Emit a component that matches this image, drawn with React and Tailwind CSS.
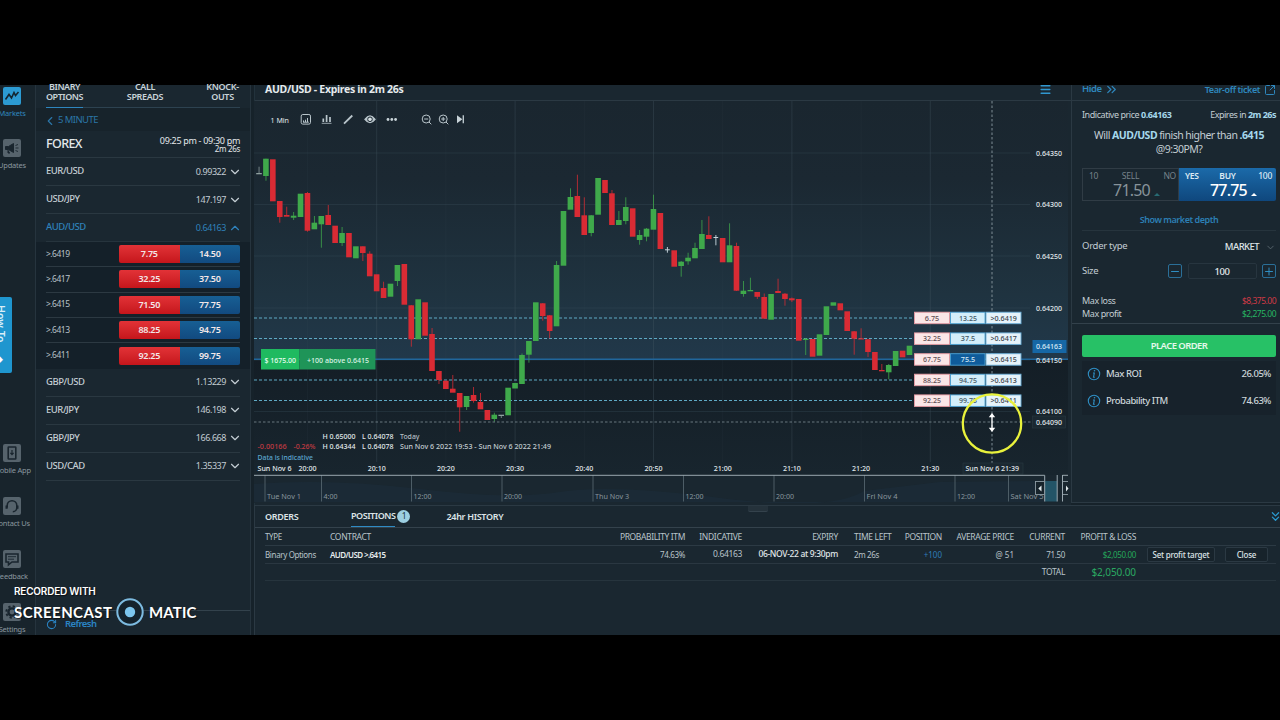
import {
  ChevronDown,
  ChevronUp,
  ChevronLeft,
  ChevronsRight,
  ChevronsDown,
  SquareArrowOutUpRight,
  Menu,
  RotateCw,
  Minus,
  Plus,
} from "lucide-react";

// [direction, body top, body bottom, wick top, wick bottom]
const candles = [
  ["n", 173, 174.3, 166.7, 174],
  ["u", 158.7, 176, 158.7, 180.7],
  ["d", 159.3, 201.3],
  ["d", 201, 217, 201, 222.7],
  ["d", 215, 216.7, 206.7, 216],
  ["u", 215.7, 217.7, 212, 220],
  ["u", 193.7, 217],
  ["d", 193, 230.7, 192, 231.7],
  ["u", 222.7, 229.3, 216, 229],
  ["u", 216, 224.3, 216, 247.7],
  ["d", 215, 225, 205, 225],
  ["d", 225.7, 243],
  ["u", 233, 243, 227, 246],
  ["d", 233, 257.3],
  ["u", 246.3, 258.3],
  ["d", 246.3, 253, 246.3, 261],
  ["d", 253.7, 276.3, 251.3, 276],
  ["d", 274.3, 291.3],
  ["d", 288, 298, 281.7, 298],
  ["u", 283.7, 296.7],
  ["u", 265, 281, 265, 286],
  ["d", 264, 304.7],
  ["d", 305.3, 339.3, 305, 346.7],
  ["u", 299.3, 339.3],
  ["d", 302.3, 335.7],
  ["d", 334, 371, 328, 371],
  ["d", 371, 380, 371, 384],
  ["d", 380.7, 389],
  ["d", 388.7, 392.7, 375, 392],
  ["d", 393, 407.3, 393, 431.7],
  ["u", 396, 407, 396, 410],
  ["d", 395, 401, 387, 402.7],
  ["d", 402, 409.3, 393, 409],
  ["d", 410, 420],
  ["u", 414.7, 419, 412.7, 421.7],
  ["n", 414.7, 416, 415, 418],
  ["u", 387.7, 415.3],
  ["u", 383, 388.5],
  ["u", 355, 384, 353.5, 384],
  ["u", 341, 354.7, 341, 362.7],
  ["u", 302.3, 341],
  ["d", 303.3, 316, 303, 320.7],
  ["d", 315.3, 331, 315, 338.3],
  ["u", 265, 326.3, 261, 326],
  ["u", 211, 265.7],
  ["u", 197, 209.7, 188.3, 209],
  ["d", 196, 217, 174.7, 217],
  ["d", 215.3, 235, 197.3, 235],
  ["u", 215.3, 233, 215, 236.3],
  ["u", 178, 214.7],
  ["d", 180, 193],
  ["d", 193.3, 225, 190, 225],
  ["u", 220, 225, 211, 225],
  ["u", 207, 221, 197.3, 224.3],
  ["d", 208.3, 236.7],
  ["u", 235, 240, 230, 244.7],
  ["u", 228.7, 236.7, 228, 241.3],
  ["u", 209, 229.7, 194.7, 229],
  ["d", 213, 249],
  ["x", 249.3, 250.3, 247, 252.7],
  ["d", 250.3, 266.7],
  ["u", 261.7, 266, 261, 276.7],
  ["u", 257.7, 261.3, 252.7, 264.7],
  ["u", 248, 258.3, 242.7, 258],
  ["u", 234, 249, 220, 249],
  ["d", 235, 239, 216.3, 239],
  ["x", 237, 238, 235, 245.3],
  ["d", 238, 262.3],
  ["u", 245.3, 262.3, 223.3, 262],
  ["d", 246, 290.7, 242.7, 291],
  ["u", 290.7, 294, 281, 296.7],
  ["u", 290, 291.3, 277.7, 291],
  ["d", 292, 296.8, 292, 299],
  ["d", 297, 318.7, 293.5, 318],
  ["u", 294, 319.7],
  ["d", 291, 293, 278.7, 293],
  ["d", 293.7, 299, 293, 305.7],
  ["d", 298.3, 300.3, 297.5, 302],
  ["d", 299, 340.7],
  ["u", 338.7, 340, 338, 355],
  ["d", 339, 356.7],
  ["u", 334.3, 355.7],
  ["u", 306.3, 335],
  ["u", 302.3, 305.7],
  ["d", 303.3, 310.3],
  ["d", 311.3, 331],
  ["d", 331.3, 338.7, 331, 354.7],
  ["d", 338.3, 339.5, 328.3, 339],
  ["d", 339.3, 352, 339, 357],
  ["d", 352, 370],
  ["d", 370, 371.3, 364, 371],
  ["u", 365, 372.3, 364, 379.3],
  ["u", 351, 366],
  ["d", 350.7, 357.3],
  ["u", 345.7, 355],
];

const candleColors = { u: "#3fa94b", d: "#d92b34", n: "#8fa09f", x: "#c5d3da" };

const ladder = [
  [318, "6.75", "13.25", ">0.6419"],
  [338.7, "32.25", "37.5", ">0.6417"],
  [359.5, "67.75", "75.5", ">0.6415"],
  [380, "88.25", "94.75", ">0.6413"],
  [400.7, "92.25", "99.75", ">0.6411"],
];

const prices = [
  [153, "0.64350"],
  [204.5, "0.64300"],
  [256, "0.64250"],
  [308, "0.64200"],
  [360, "0.64150"],
  [411.5, "0.64100"],
  [422, "0.64090"],
];

const times = ["20:00", "20:10", "20:20", "20:30", "20:40", "20:50", "21:00", "21:10", "21:20", "21:30"];

const navTicks = [
  [265, "Tue Nov 1", 34],
  [321.5, "4:00", 14],
  [411.5, "12:00", 18],
  [502, "20:00", 18],
  [593, "Thu Nov 3", 34],
  [683.5, "12:00", 18],
  [774, "20:00", 18],
  [864.5, "Fri Nov 4", 31],
  [955, "12:00", 18],
  [1008.5, "Sat Nov 5", 33],
];

const strikes = [
  [">.6419", "7.75", "14.50"],
  [">.6417", "32.25", "37.50"],
  [">.6415", "71.50", "77.75"],
  [">.6413", "88.25", "94.75"],
  [">.6411", "92.25", "99.75"],
];

// chart label, y is the vertical centre of the text
function Label({ x, y, w, size = 7.5, fill = "#e3eaed", anchor = "start", weight = 500, children }) {
  return (
    <text
      x={x}
      y={y + size * 0.37}
      textLength={w}
      lengthAdjust="spacingAndGlyphs"
      fontSize={size}
      fill={fill}
      textAnchor={anchor}
      fontWeight={weight}
    >
      {children}
    </text>
  );
}

function RailItem({ label, active, children }) {
  return (
    <div className="flex w-6 flex-col items-center">
      <svg
        viewBox="0 0 18 18"
        className={
          active
            ? "h-[18px] w-[18px] rounded-xs bg-[#2c9bd3] text-[#142631]"
            : "h-[18px] w-[18px] rounded-xs bg-[#56636c] text-[#19252e]"
        }
        fill="none"
        stroke="currentColor"
        strokeWidth="1.6"
      >
        {children}
      </svg>
      <span
        className={
          active
            ? "mt-0.5 text-[7.5px] leading-3 tracking-[-0.03em] whitespace-nowrap text-[#2f87bd]"
            : "mt-0.5 text-[7.5px] leading-3 tracking-[-0.03em] whitespace-nowrap text-[#8a979f]"
        }
      >
        {label}
      </span>
    </div>
  );
}

function Rail() {
  return (
    <aside className="relative flex w-9 shrink-0 flex-col overflow-hidden border-r border-[#26343e] bg-[#18242c] pt-0.5">
      <div className="flex h-[363px] flex-col gap-5">
        <RailItem label="Markets" active>
          <path d="M2.5 12.5 L6 7.5 L8.5 11 L11 5.5 L12.5 8.5 L15.5 5" />
        </RailItem>
        <RailItem label="Updates">
          <path d="M2.5 7.5h3l5-3v9l-5-3h-3z M5 11v3h2" fill="currentColor" strokeWidth="1" />
          <path d="M12.5 6.5l2.5-1 M12.5 9h3 M12.5 11.5l2.5 1" strokeWidth="0.9" />
        </RailItem>
      </div>
      <div className="flex flex-col gap-[21px]">
        <RailItem label="Mobile App">
          <rect x="5.2" y="3" width="7.6" height="12" rx="0.5" />
          <path d="M9 6v4 M7.4 8.8L9 10.6l1.6-1.8" strokeWidth="1.2" />
        </RailItem>
        <RailItem label="Contact Us">
          <path d="M4.2 10.5V8.5a4.8 4.8 0 0 1 9.6 0v2.2a4 4 0 0 1-4 4" />
          <path d="M3.6 8.5v3.2 M14.4 8.5v3.2" strokeWidth="2.2" />
        </RailItem>
        <RailItem label="Feedback">
          <path d="M3 4h12v8H9l-3.5 2.8V12H3z" />
          <path d="M5 6.7h8 M5 9.2h6" strokeWidth="0.9" />
        </RailItem>
        <RailItem label="Settings">
          <circle cx="9" cy="9" r="3.6" strokeWidth="2.4" />
          <circle cx="9" cy="9" r="5.7" strokeWidth="2" strokeDasharray="2.24 2.24" />
        </RailItem>
      </div>
      <div className="absolute top-[212px] left-0 h-[76px] w-3 overflow-hidden rounded-r-xs bg-[#1f96cf]">
        <span className="absolute top-2 -left-[6px] text-[10.5px] leading-[14px] font-semibold whitespace-nowrap text-[#d8eef8] [writing-mode:vertical-rl]">
          How To
        </span>
        <span className="absolute top-[55px] -left-1 text-[9px] text-white">◆</span>
      </div>
    </aside>
  );
}

function MarketRow({ name, price, open }) {
  const Icon = open ? ChevronUp : ChevronDown;
  return (
    <div
      className={
        open
          ? "flex h-7 items-center border-b border-[#26343d] text-[#2f82bb]"
          : "flex h-7 items-center border-b border-[#2a3841] text-[#c3cdd3]"
      }
    >
      <span className="flex-1 text-[9.5px] font-medium tracking-[-0.05em]">{name}</span>
      <span className="text-[9px] tracking-[-0.05em]">{price}</span>
      <Icon className="-mr-0.5 ml-0.5" size={14} strokeWidth={2} />
    </div>
  );
}

function Markets() {
  return (
    <aside className="flex w-[215px] shrink-0 flex-col border-r border-[#26343e] bg-[#1a2730]">
      <div className="px-2.5">
        <div className="flex h-[23px] items-end justify-between border-b border-[#2d4250] text-center text-[9px] leading-[10px] font-semibold text-[#c9d3d8]">
          <div className="-mb-px w-[37px] border-b-[1.5px] border-[#2e86bf] pb-[5px]">
            <span className="-mx-1 block tracking-[-0.05em]">BINARY OPTIONS</span>
          </div>
          <span className="w-11 translate-x-px pb-[5px] tracking-[-0.04em]">CALL SPREADS</span>
          <span className="w-[35px] pb-[5px] tracking-[-0.04em]">KNOCK-OUTS</span>
        </div>
      </div>
      <div className="flex h-[23px] items-center bg-[#17232b] px-2.5 pt-0.5 text-[9.5px] tracking-[-0.06em] text-[#2b76a7]">
        <ChevronLeft className="-ml-[3px] mr-px" size={14} strokeWidth={2} />
        5 MINUTE
      </div>
      <div className="px-2.5">
        <div className="flex h-[27px] items-center justify-between border-b border-[#2a3841] text-[#e4e9eb]">
          <span className="text-[12.5px] font-medium tracking-[-0.05em]">FOREX</span>
          <div className="text-right text-[9px] leading-[9px] tracking-[-0.035em]">
            <div>09:25 pm - 09:30 pm</div>
            <div className="text-[8px] leading-[8px]">2m 26s</div>
          </div>
        </div>
        <MarketRow name="EUR/USD" price="0.99322" />
        <MarketRow name="USD/JPY" price="147.197" />
        <MarketRow name="AUD/USD" price="0.64163" open />
      </div>
      <div className="h-[126.5px] bg-[#142029] px-2.5">
        {strikes.map(([name, sell, buy]) => (
          <div key={name} className="flex h-[25.3px] items-center border-b border-[#2c3942] last:border-0">
            <span className="w-[73px] text-[8.5px] tracking-[-0.06em] text-[#b8c2c8]">{name}</span>
            <div className="flex h-[18px] flex-1 overflow-hidden rounded-xs text-center text-[9px] leading-[18px] font-semibold tracking-[-0.03em] text-[#f3e7e8]">
              <span className="w-1/2 bg-linear-to-b from-[#e23237] to-[#c5151b]">{sell}</span>
              <span className="w-1/2 bg-linear-to-b from-[#175f94] to-[#124a80]">{buy}</span>
            </div>
          </div>
        ))}
      </div>
      <div className="px-2.5">
        <MarketRow name="GBP/USD" price="1.13229" />
        <MarketRow name="EUR/JPY" price="146.198" />
        <MarketRow name="GBP/JPY" price="166.668" />
        <MarketRow name="USD/CAD" price="1.35337" />
      </div>
      <div className="mt-auto flex h-[25px] items-center gap-2 border-t border-[#33424c] pt-[3px] pl-2.5 text-[9.5px] font-semibold tracking-[-0.06em] text-[#2a84c4]">
        <RotateCw size={11} strokeWidth={2.2} />
        Refresh
      </div>
    </aside>
  );
}

function Toolbar() {
  return (
    <svg
      viewBox="260 108 220 22"
      className="absolute top-[7px] left-1.5 h-[22px] w-[220px]"
      fill="none"
      stroke="#b9c5cb"
      strokeWidth="1"
    >
      <g stroke="none">
        <Label x={270.5} y={119.8} w={18.5} weight={400}>
          1 Min
        </Label>
      </g>
      <rect x="301.2" y="114.5" width="9.3" height="9.6" rx="1.6" />
      <path d="M303.5 122v-1.6 M305.5 122v-2.3 M307.5 122v-4 M303 122.2h5.8" />
      <path d="M323.3 122v-3.5 M326.6 122v-7 M330 122v-5" strokeWidth="1.7" />
      <path d="M321.7 123.3h9.8" strokeWidth="0.8" />
      <path d="M344 123.7l8.3-8.2" strokeWidth="1.8" />
      <path d="M365 119.3q5-6.6 10 0q-5 6.6-10 0z" strokeWidth="1.4" fill="#b9c5cb" />
      <circle cx="370" cy="119.3" r="2.3" stroke="#1b2932" fill="#d5dee2" />
      <g fill="#c9d4d9" stroke="none">
        <circle cx="388" cy="119.5" r="1.4" />
        <circle cx="391.8" cy="119.5" r="1.4" />
        <circle cx="395.6" cy="119.5" r="1.4" />
      </g>
      <circle cx="426.2" cy="119" r="4" />
      <path d="M424.2 119h4 M429 122l2.3 2.3" />
      <circle cx="443.2" cy="119" r="4" />
      <path d="M441.2 119h4 M443.2 117v4 M446 122l2.3 2.3" />
      <path d="M457 115.3l5.4 4-5.4 4z" fill="#c9d4d9" stroke="none" />
      <path d="M463.3 115.3v8" strokeWidth="1.4" />
    </svg>
  );
}

function PriceChart() {
  return (
    <svg viewBox="254 101 817 402" className="block h-[402px] w-[817px]">
      <defs>
        <linearGradient id="sky" x1="0" y1="0" x2="0" y2="1">
          <stop offset="0" stopColor="#1a262f" />
          <stop offset="0.3" stopColor="#1b2832" />
          <stop offset="0.75" stopColor="#1f3340" />
          <stop offset="1" stopColor="#21384a" />
        </linearGradient>
        <linearGradient id="ground" x1="0" y1="0" x2="0" y2="1">
          <stop offset="0" stopColor="#141e26" />
          <stop offset="1" stopColor="#18252e" />
        </linearGradient>
      </defs>
      <rect x="254" y="101" width="817" height="402" fill="#1a2730" />
      <rect x="254" y="101" width="814" height="258" fill="url(#sky)" />
      <rect x="254" y="359" width="814" height="116" fill="url(#ground)" />

      {times.map((t, i) => (
        <path
          key={t}
          d={`M${307.5 + i * 69.2} 101V462`}
          stroke="#4a5d68"
          strokeWidth="1"
          opacity={i % 2 ? 0.3 : 0.08}
        />
      ))}
      {prices.slice(0, 6).map(([y]) => (
        <path key={y} d={`M254 ${y}H1030`} stroke="#3b505c" strokeWidth="1" opacity="0.32" />
      ))}

      <path d="M254 359.3H1068" stroke="#20669c" strokeWidth="1.6" />
      <g stroke="#5fa9c4" strokeWidth="1.2" strokeDasharray="3 2">
        <path d="M254 318H914" />
        <path d="M254 338.5H914" />
        <path d="M254 380H914" />
        <path d="M254 400.5H914" />
      </g>

      {candles.map(([kind, top, bottom, high, low], i) => {
        const x = 259 + i * 6.92;
        return (
          <g key={i} fill={candleColors[kind]}>
            {high !== undefined && (
              <rect x={x - 0.4} y={high} width={kind === "x" ? 1.1 : 0.9} height={low - high} opacity="0.85" />
            )}
            <rect
              x={kind === "x" ? x - 2.3 : x - 2.8}
              y={top}
              width={kind === "x" ? 4.8 : 5.6}
              height={bottom - top}
            />
          </g>
        );
      })}

      <g stroke="#7e8d95" strokeDasharray="2.5 2">
        <path d="M254 422H1034" strokeWidth="0.8" />
        <path d="M992 101V464" strokeWidth="1" />
      </g>

      {/* open position */}
      <rect x="261" y="349" width="38.5" height="20.5" fill="#1fba60" />
      <rect x="299.5" y="349" width="76" height="20.5" fill="#1f9458" />
      <Label x={264.5} y={360} w={31.5} fill="#eafff2">$ 1675.00</Label>
      <Label x={307} y={360} w={62} fill="#dcf5e6">+100 above 0.6415</Label>

      {ladder.map(([y, sell, buy, strike]) => {
        const picked = strike === ">0.6415";
        return (
          <g key={strike}>
            <rect x="914.5" y={y - 5.8} width="35" height="11.5" fill="#fae6e7" stroke="#e79aa3" strokeWidth="0.9" />
            <rect
              x="950.5"
              y={y - 5.8}
              width="34.5"
              height="11.5"
              fill={picked ? "#0f5c9b" : "#d3eefa"}
              stroke="#4da4d6"
              strokeWidth="0.9"
            />
            <rect x="986" y={y - 5.8} width="35" height="11.5" fill="#e6f3fa" stroke="#6bb0da" strokeWidth="0.9" />
            <Label x={932} y={y} w={sell.length * 3.6} fill="#5c4b52" anchor="middle">{sell}</Label>
            <Label x={968} y={y} w={buy.length * 3.6} fill={picked ? "#d5ebf8" : "#3f5563"} anchor="middle">{buy}</Label>
            <Label x={1003.7} y={y} w={26.5} fill="#3b444b" anchor="middle">{strike}</Label>
          </g>
        );
      })}

      <rect x="1032.5" y="340" width="34" height="13" fill="#1667a5" />
      <rect x="1032.5" y="416" width="33" height="12" fill="#1b2831" stroke="#2a3942" strokeWidth="0.6" />
      <Label x={1036} y={346.5} w={26} fill="#dcecf7">0.64163</Label>
      {prices.map(([y, text]) => (
        <Label key={text} x={1036} y={y} w={26}>{text}</Label>
      ))}

      <Label x={322.5} y={436.5} w={33}>H 0.65000</Label>
      <Label x={362} y={436.5} w={31.5}>L 0.64078</Label>
      <Label x={400} y={436.5} w={19.5} fill="#b3bec4">Today</Label>
      <Label x={257.5} y={446} w={29} fill="#c23a42">-0.00166</Label>
      <Label x={293.5} y={446} w={22} fill="#c23a42">-0.26%</Label>
      <Label x={322.5} y={446} w={33}>H 0.64344</Label>
      <Label x={362} y={446} w={31.5}>L 0.64078</Label>
      <Label x={400} y={446} w={151} fill="#c3cdd2">Sun Nov 6 2022 19:53 - Sun Nov 6 2022 21:49</Label>
      <Label x={257.5} y={457} w={55.5} fill="#5ba6cf">Data is indicative</Label>
      <Label x={257.5} y={468.5} w={34}>Sun Nov 6</Label>
      {times.map((t, i) => (
        <Label key={t} x={307.5 + i * 69.2} y={468.5} w={18} anchor="middle">{t}</Label>
      ))}
      <rect x="963" y="463" width="60" height="11" fill="#1b2831" stroke="#2a3942" strokeWidth="0.6" />
      <Label x={965.5} y={468.5} w={53.5}>Sun Nov 6 21:39</Label>

      {/* range navigator */}
      <path d="M254 484 Q330 478 420 489 T560 492 T720 498 T864 491 L940 482 L1045 481 V502 H254z" fill="#1c2c38" opacity="0.8" />
      {navTicks.map(([x, text, w]) => (
        <g key={x}>
          <path d={`M${x} 475V501.5`} stroke="#54636c" strokeWidth="0.9" />
          <Label x={x + 2} y={496} w={w} fill="#89969d" weight={400}>{text}</Label>
        </g>
      ))}
      <rect x="1045" y="481" width="12" height="20.5" fill="#235467" />
      <path d="M254 475.3H1044.7V501.5 M1057.2 475V501.5 M1062.5 475V501.5 M1062.5 475.3H1068" fill="none" stroke="#9aa8b0" strokeWidth="1" />
      <rect x="1035.5" y="481.5" width="9" height="13" fill="#17232b" stroke="#8d9ba3" strokeWidth="0.9" />
      <path d="M1041.5 485.5v6l-3.2-3z M1066 485.5v6l2.5-3z" fill="#dfe7ea" />
      <path d="M1063 481.5h5 M1063 494.5h5" stroke="#8d9ba3" strokeWidth="0.9" />

      <circle cx="992" cy="423.5" r="29.2" fill="none" stroke="#e9f23c" strokeWidth="2.3" />
      <path d="M992 416V429" stroke="#fff" strokeWidth="1.3" />
      <path d="M992 413l3.2 4.2h-6.4z M992 432l3.2-4.2h-6.4z" fill="#fff" />
    </svg>
  );
}

function Chart() {
  return (
    <section className="w-[817px] shrink-0 border-l border-[#22323c] bg-[#1a2730]">
      <div className="flex h-4 items-center justify-between border-b border-[#2b3943] pt-px pr-[19px] pl-2.5">
        <h1 className="-mt-1.5 text-[10.5px] font-bold tracking-[-0.03em] whitespace-nowrap text-[#e5eaec]">
          AUD/USD - Expires in 2m 26s
        </h1>
        <Menu className="-mt-2 text-[#3097cf]" size={13} strokeWidth={2.8} />
      </div>
      <div className="relative -ml-px">
        <PriceChart />
        <Toolbar />
      </div>
    </section>
  );
}

function InfoRow({ label, value }) {
  return (
    <div className="flex h-[27px] items-center bg-[#17222b] pr-[5px] pb-px pl-[5px] text-[9.5px] font-medium tracking-[-0.05em] text-[#ccd5d9]">
      <svg viewBox="0 0 14 14" className="mr-[5px] h-3.5 w-3.5" fill="none" stroke="#2f8fc4">
        <circle cx="7" cy="7" r="5.7" strokeWidth="1.1" />
        <path d="M6 6h1.3l-0.8 4.2h1.3" strokeWidth="1.1" />
        <circle cx="7.5" cy="3.8" r="0.8" fill="#2f8fc4" stroke="none" />
      </svg>
      <span className="flex-1">{label}</span>
      <span>{value}</span>
    </div>
  );
}

function Ticket() {
  return (
    <section className="h-[418px] flex-1 border-b border-l border-[#2b3943] bg-[#1a2730] text-[#c3cdd3]">
      <div className="flex h-4 items-center border-b border-[#2b3943] pr-1 pl-2.5 text-[9px] font-semibold tracking-[-0.045em] text-[#2e87bd]">
        <span className="-mt-1.5 text-[9.5px]">Hide</span>
        <ChevronsRight className="-mt-1.5 ml-0.5" size={15} strokeWidth={2} />
        <span className="-mt-1.5 mr-1 ml-auto">Tear-off ticket</span>
        <SquareArrowOutUpRight className="-mt-1.5" size={12} strokeWidth={2} />
      </div>
      <div className="pr-1 pl-2.5">
        <div className="mt-2 flex h-3 items-center justify-between text-[9px] tracking-[-0.045em] whitespace-nowrap">
          <span className="tracking-[-0.05em]">
            Indicative price <b className="font-bold text-[#a5d8ec]">0.64163</b>
          </span>
          <span className="tracking-[-0.055em]">
            Expires in <b className="font-bold text-[#a5d8ec]">2m 26s</b>
          </span>
        </div>
        <p className="mt-[7px] text-center text-[10.5px] leading-[14px] tracking-[-0.05em]">
          Will <b className="text-[#a5d8ec]">AUD/USD</b> finish higher than <b className="text-[#a5d8ec]">.6415</b>
          <br />
          @9:30PM?
        </p>
        <div className="mt-[12px] flex h-[33px] text-[8.5px] leading-[10px] tracking-[-0.03em]">
          <div className="w-1/2 border border-[#303c45] px-1.5 pt-0.5 text-[#77838b]">
            <div className="grid grid-cols-3">
              <span>10</span>
              <span className="text-center">SELL</span>
              <span className="-mr-1 text-right">NO</span>
            </div>
            <div className="flex items-end justify-center gap-1 pl-3 text-[16px] leading-[19px] tracking-[-0.05em] text-[#87939a]">
              71.50
              <i className="mb-1 border-x-[3px] border-b-[3px] border-transparent border-b-[#276b73]" />
            </div>
          </div>
          <div className="w-1/2 rounded-r-xs bg-linear-to-b from-[#1b6aa9] to-[#0f477d] px-1.5 pt-[3px] text-[#dceaf4]">
            <div className="grid grid-cols-3">
              <span className="font-semibold">YES</span>
              <span className="text-center font-semibold">BUY</span>
              <span className="-mr-0.5 text-right font-medium">100</span>
            </div>
            <div className="flex items-end justify-center gap-1 pl-3 text-[16px] leading-[19px] font-medium tracking-[-0.05em] text-white">
              77.75
              <i className="mb-1 border-x-[3px] border-b-[3px] border-transparent border-b-white" />
            </div>
          </div>
        </div>
        <div className="mt-2 h-[22px] border-b border-[#26343d] text-center text-[9px] leading-[21px] font-semibold tracking-[-0.05em] text-[#2c7fb4]">
          Show market depth
        </div>
        <div className="mt-[7px] flex h-[18px] items-center text-[9.5px] tracking-[-0.03em]">
          <span className="flex-1 -translate-y-px">Order type</span>
          <span className="font-medium tracking-[-0.06em] text-[#dde4e7]">MARKET</span>
          <ChevronDown className="ml-1.5 text-[#6d7a82]" size={11} strokeWidth={1.5} />
        </div>
        <div className="mt-[7px] flex h-[16px] items-center text-[9.5px]">
          <span className="flex-1 tracking-[-0.03em]">Size</span>
          <span className="flex h-3.5 w-3.5 items-center justify-center rounded-xs border border-[#2a6f98] text-[#2f8ec2]">
            <Minus size={13} strokeWidth={2} />
          </span>
          <span className="mx-[5.5px] h-4 w-[69px] rounded-xs border border-[#27353f] text-center text-[9.5px] leading-[15px] font-medium tracking-[-0.04em] text-[#e3e9ec]">
            100
          </span>
          <span className="flex h-3.5 w-3.5 items-center justify-center rounded-xs border border-[#2a6f98] text-[#2f8ec2]">
            <Plus size={13} strokeWidth={2} />
          </span>
        </div>
        <div className="mt-[15px] text-[9px] leading-[13px] tracking-[-0.045em]">
          <div className="flex justify-between">
            <span>Max loss</span>
            <span className="text-[8.5px] tracking-[-0.06em] text-[#d03a46]">$8,375.00</span>
          </div>
          <div className="flex justify-between">
            <span>Max profit</span>
            <span className="text-[8.5px] tracking-[-0.06em] text-[#27b562]">$2,275.00</span>
          </div>
        </div>
      </div>
      <div className="mt-[3px] border-t border-[#33414b] pt-[11px] pr-1 pl-2.5">
        <button className="block h-[22px] w-full rounded-xs bg-[#27c166] text-[9.5px] font-semibold tracking-[-0.06em] text-[#e3f8eb]">
          PLACE ORDER
        </button>
        <div className="mt-1">
          <InfoRow label="Max ROI" value="26.05%" />
          <InfoRow label="Probability ITM" value="74.63%" />
        </div>
      </div>
    </section>
  );
}

const columns =
  "grid grid-cols-[65px_270px_85px_57px_96px_53px_51px_72px_51px_71px_1fr] items-center whitespace-nowrap";

function Positions() {
  return (
    <section className="flex-1 border-t border-l border-[#2b3943] bg-[#1a2730] text-[#b9c4ca]">
      <div className="relative flex h-[22px] items-center border-b border-[#34424c] pl-2.5 text-[9px] font-semibold tracking-[-0.035em] text-[#dde4e7]">
        <span className="w-[86px]">ORDERS</span>
        <span className="flex h-full items-center border-b-[1.5px] border-[#2f8bc4] tracking-[-0.05em]">
          POSITIONS
        </span>
        <span className="ml-0.5 flex h-[13px] w-[13px] items-center justify-center rounded-full bg-[#9ccfe2] text-[8.5px] font-normal text-[#1b3644]">
          1
        </span>
        <span className="ml-9">24hr HISTORY</span>
        <i className="absolute top-0 left-[493px] h-1.5 w-5 rounded-b-xs border-b border-[#34424c] bg-[#25323b]" />
        <ChevronsDown className="-mr-[3px] ml-auto text-[#2a9ad0]" size={15} strokeWidth={2} />
      </div>
      <div className="pr-1 pl-2.5 text-[8.5px] tracking-[-0.04em]">
        <div className={`${columns} h-[18px] border-b border-[#2c3a44] pt-px`}>
          <span className="text-[8px]">TYPE</span>
          <span>CONTRACT</span>
          <span className="text-right tracking-[-0.045em]">PROBABILITY ITM</span>
          <span className="text-right">INDICATIVE</span>
          <span className="text-right">EXPIRY</span>
          <span className="pl-4">TIME LEFT</span>
          <span className="text-right">POSITION</span>
          <span className="text-right">AVERAGE PRICE</span>
          <span className="text-right">CURRENT</span>
          <span className="text-right">PROFIT &amp; LOSS</span>
        </div>
        <div className={`${columns} h-[18px] border-b border-[#2a3741] text-[8px]`}>
          <span className="tracking-[-0.045em]">Binary Options</span>
          <span className="font-semibold tracking-[-0.075em] text-[#e6ebed]">AUD/USD &gt;.6415</span>
          <span className="text-right">74.63%</span>
          <span className="text-right text-[8.5px]">0.64163</span>
          <span className="text-right text-[8.5px] font-medium text-[#e0e6e9]">06-NOV-22 at 9:30pm</span>
          <span className="pl-4">2m 26s</span>
          <span className="text-right tracking-normal text-[#2f7db8]">+100</span>
          <span className="text-right tracking-normal">@ 51</span>
          <span className="text-right">71.50</span>
          <span className="text-right text-[#25a75b]">$2,050.00</span>
          <span className="flex gap-2.5 pl-[11px] text-center leading-[13px] font-medium tracking-[-0.03em] text-[#dde4e7]">
            <span className="w-[68px] rounded-xs border border-[#2b3943] bg-[#17232b]">Set profit target</span>
            <span className="w-[43px] rounded-xs border border-[#2b3943] bg-[#17232b]">Close</span>
          </span>
        </div>
        <div className={`${columns} h-[17px] border-b border-[#26343d] pt-px`}>
          <span className="col-start-9 text-right">TOTAL</span>
          <span className="text-right text-[10px] tracking-[-0.01em] text-[#2aa862]">$2,050.00</span>
        </div>
      </div>
    </section>
  );
}

function Watermark() {
  return (
    <div className="absolute top-[585px] left-3.5 text-white [text-shadow:1px_1px_1px_rgba(0,0,0,0.6)]">
      <div className="font-[Inter,sans-serif] text-[10px] leading-[13px] font-semibold tracking-[-0.02em]">
        RECORDED WITH
      </div>
      <div className="flex items-center font-[Lato,sans-serif] text-[15px] leading-7 font-bold">
        <span className="w-[98px] tracking-[0.028em]">SCREENCAST</span>
        <svg viewBox="0 0 28 28" className="mr-[5px] ml-1 h-7 w-7">
          <circle cx="14" cy="14" r="12.7" fill="#14222c" stroke="#7dbbe0" strokeWidth="2" />
          <circle cx="14" cy="14" r="5.2" fill="#7cc4ec" />
        </svg>
        <span className="tracking-[0.01em]">MATIC</span>
      </div>
    </div>
  );
}

function App() {
  return (
    <div className="relative flex h-[720px] w-[1280px] flex-col overflow-hidden bg-black pt-[85px] font-['Noto_Sans','Open_Sans',sans-serif]">
      <main className="flex h-[550px] bg-[#16222a]">
        <Rail />
        <Markets />
        <div className="ml-[3px] flex min-w-0 flex-1 flex-col">
          <div className="flex h-[420px] shrink-0">
            <Chart />
            <Ticket />
          </div>
          <Positions />
        </div>
      </main>
      <Watermark />
    </div>
  );
}

export default App;
